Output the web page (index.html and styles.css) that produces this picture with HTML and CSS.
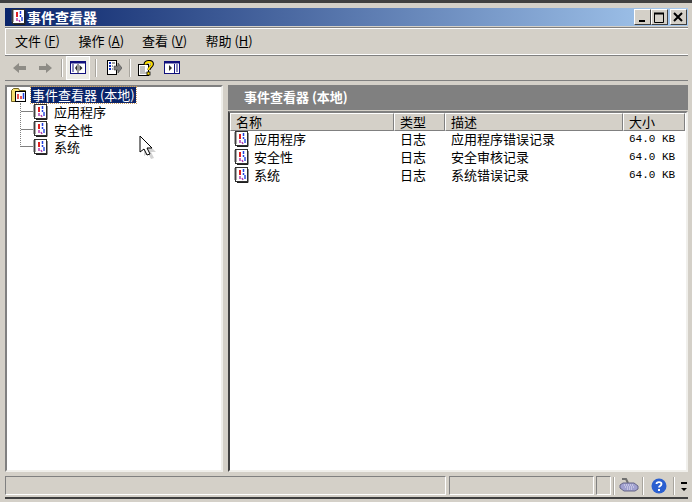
FILE: index.html
```html
<!DOCTYPE html>
<html lang="zh-CN">
<head>
    <meta charset="UTF-8">
    <title>事件查看器</title>
    <link rel="stylesheet" href="styles.css">
</head>
<body>
    <svg class="defs" width="0" height="0">
        <symbol id="log" viewBox="0 0 16 16">
            <rect x="2.500" y="0.500" width="12" height="14" fill="#fff" stroke="#303030"/>
            <path d="M15 2v13.500H4" fill="none" stroke="#202020"/>
            <path d="M1 2h3M1 4h3M1 6h3M1 8h3M1 10h3M1 12h3" stroke="#505050"/>
            <path d="M7 3v5" stroke="#e02020" stroke-width="2"/>
            <path d="M10.500 2v3M10.500 6v2" stroke="#2040e0" stroke-width="1.500"/>
            <path d="M12 8v4" stroke="#3050e0" stroke-width="1.500"/>
            <path d="M7 9v3M9 11l1 2" stroke="#b040b0" stroke-width="1.500"/>
        </symbol>
    </svg>

    <div class="window">
        <div class="title-bar">
            <svg class="title-icon" width="16" height="16"><use href="#log"/></svg>
            <span class="title-text">事件查看器</span>
            <div class="win-buttons">
                <button class="win-btn"><svg width="11" height="11"><path d="M2 8h6v2H2z"/></svg></button>
                <button class="win-btn"><svg width="11" height="11"><path d="M0.500 1.500h9v9h-9z" fill="none" stroke="#000"/><path d="M0 1.500h10" stroke="#000" stroke-width="2"/></svg></button>
                <button class="win-btn close"><svg width="11" height="11"><path d="M1 1l8 8M9 1L1 9" stroke="#000" stroke-width="2"/></svg></button>
            </div>
        </div>

        <div class="menu-bar">
            <span class="menu-item">文件 (<u>F</u>)</span>
            <span class="menu-item">操作 (<u>A</u>)</span>
            <span class="menu-item">查看 (<u>V</u>)</span>
            <span class="menu-item">帮助 (<u>H</u>)</span>
        </div>

        <div class="tool-bar">
            <svg class="tool back" width="16" height="16"><path d="M1 8l6-5v3h7v4H7v3z" fill="#8e8c86"/></svg>
            <svg class="tool forward" width="16" height="16"><path d="M15 8L9 3v3H2v4h7v3z" fill="#8e8c86"/></svg>
            <span class="sep"></span>
            <span class="tool-on">
                <svg width="16" height="16" viewBox="0 0 16 16">
                    <rect x="0.500" y="1.500" width="15" height="12" fill="#fff" stroke="#10107c"/>
                    <path d="M0 2.500h16" stroke="#10107c" stroke-width="2"/>
                    <path d="M2 5h2M2 7h2M2 9h2M2 11h2" stroke="#10107c"/>
                    <path d="M7 5l-2 3 2 3zM9.500 5v6l3-3z" fill="#303030"/>
                    <path d="M8 4v9" stroke="#303030"/>
                </svg>
            </span>
            <span class="sep"></span>
            <svg class="tool export" width="16" height="16" viewBox="0 0 16 16">
                <rect x="1.500" y="0.500" width="9" height="14" fill="#fff" stroke="#000"/>
                <path d="M3 3h2M3 6h2M3 9h2" stroke="#1030c0" stroke-width="2"/>
                <path d="M6 3h3M6 6h1M6 9h1" stroke="#404040"/>
                <path d="M8 6h4V3l4 5-4 5v-3H8z" fill="#808080" stroke="#303030" stroke-width="0.500"/>
            </svg>
            <span class="sep"></span>
            <svg class="tool help-tool" width="16" height="16" viewBox="0 0 16 16">
                <rect x="0.500" y="4.500" width="10" height="11" fill="#fff" stroke="#000"/>
                <path d="M2 7h5M2 9h5M2 11h5M2 13h7" stroke="#808080"/>
                <path d="M7 4.500C7 1 14.500 0 14.500 4c0 2.500-3.500 3-3.500 6" fill="none" stroke="#000" stroke-width="3"/>
                <path d="M7.500 4.500C7.500 1.500 14 1 14 4c0 2.500-3.500 3-3.500 6" fill="none" stroke="#ffe000" stroke-width="1.800"/>
                <rect x="9" y="12" width="3" height="3" fill="#ffe000" stroke="#000" stroke-width="0.800"/>
            </svg>
            <svg class="tool" width="16" height="16" viewBox="0 0 16 16">
                <rect x="0.500" y="1.500" width="15" height="12" fill="#fff" stroke="#10107c"/>
                <path d="M0 2.500h16" stroke="#10107c" stroke-width="2"/>
                <path d="M12 5h2M12 7h2M12 9h2M12 11h2" stroke="#10107c"/>
                <path d="M5 5v6l3-3z" fill="#303030"/>
                <path d="M10.500 4v9" stroke="#10107c"/>
            </svg>
        </div>

        <div class="panes">
            <div class="tree-pane">
                <div class="tree-root">
                    <svg width="16" height="16" viewBox="0 0 16 16">
                        <path d="M0.500 3.500l2-2h5l1 2h6v11h-14z" fill="#f4e070" stroke="#706020"/>
                        <rect x="4.500" y="4.500" width="10" height="10" fill="#fff" stroke="#000"/>
                        <path d="M7 7v5M10 9v3" stroke="#e02020" stroke-width="1.500"/>
                        <path d="M12.500 6v6" stroke="#2040e0" stroke-width="1.500"/>
                    </svg>
                    <span class="selected">事件查看器 (本地)</span>
                </div>
                <div class="tree-children">
                    <div class="tree-node"><svg width="16" height="16"><use href="#log"/></svg><span>应用程序</span></div>
                    <div class="tree-node"><svg width="16" height="16"><use href="#log"/></svg><span>安全性</span></div>
                    <div class="tree-node"><svg width="16" height="16"><use href="#log"/></svg><span>系统</span></div>
                </div>
                <svg class="cursor" width="18" height="24" viewBox="0 0 18 24">
                    <path d="M4 3v16l4-3 3 6 3-1-3-6h5z" fill="#a8a8a8" opacity="0.500" transform="translate(2 2)"/>
                    <path d="M2 1v16l4-3 3 6 3-1-3-6h5z" fill="#fff" stroke="#000"/>
                </svg>
            </div>

            <div class="list-pane">
                <div class="list-caption">事件查看器 (本地)</div>
                <div class="list-box">
                    <div class="list-head">
                        <span class="col-name">名称</span>
                        <span class="col-type">类型</span>
                        <span class="col-desc">描述</span>
                        <span class="col-size">大小</span>
                    </div>
                    <div class="list-row">
                        <span class="col-name"><svg width="16" height="16"><use href="#log"/></svg>应用程序</span>
                        <span class="col-type">日志</span>
                        <span class="col-desc">应用程序错误记录</span>
                        <span class="col-size">64.0 KB</span>
                    </div>
                    <div class="list-row">
                        <span class="col-name"><svg width="16" height="16"><use href="#log"/></svg>安全性</span>
                        <span class="col-type">日志</span>
                        <span class="col-desc">安全审核记录</span>
                        <span class="col-size">64.0 KB</span>
                    </div>
                    <div class="list-row">
                        <span class="col-name"><svg width="16" height="16"><use href="#log"/></svg>系统</span>
                        <span class="col-type">日志</span>
                        <span class="col-desc">系统错误记录</span>
                        <span class="col-size">64.0 KB</span>
                    </div>
                </div>
            </div>
        </div>

        <div class="status-bar">
            <span class="status-cell main"></span>
            <span class="status-cell mid"></span>
            <span class="status-cell small"></span>
            <span class="tray-sep"></span>
            <svg class="tray-icon keyboard" width="20" height="18" viewBox="0 0 20 18">
                <path d="M3 2h4l2 4" fill="none" stroke="#707070" stroke-width="2"/>
                <path d="M1 8l3-2h11l4 3v3l-3 2H5l-4-3z" fill="#a0a0d0" stroke="#666688"/>
                <path d="M5 8h9M6 10h9M8 12h5" stroke="#e8e8f4" stroke-dasharray="1 1"/>
            </svg>
            <span class="tray-sep"></span>
            <svg class="tray-icon help" width="16" height="16" viewBox="0 0 16 16">
                <circle cx="8" cy="8" r="7.500" fill="#2a5fd0"/>
                <path d="M5.500 6C5.500 3.500 10.500 3.500 10.500 6c0 2-2.500 2-2.500 3.500" fill="none" stroke="#fff" stroke-width="1.800"/>
                <rect x="7" y="11" width="2" height="2" fill="#fff"/>
            </svg>
            <span class="tray-sep"></span>
            <svg class="tray-arrows" width="8" height="16"><path d="M1 4h6v2H1zM1 10h6l-3 3z"/></svg>
        </div>
    </div>
</body>
</html>
```

FILE: styles.css
```css
html, body {
    margin: 0;
    height: 100%;
}
body {
    background: #d4d0c8;
    font-family: "Noto Sans CJK SC", "Liberation Sans", sans-serif;
    font-size: 13px;
    color: #000;
    overflow: hidden;
}
.defs {
    position: absolute;
}
.window {
    height: 502px;
    box-sizing: border-box;
    padding: 5px 4px 3px 5px;
    border-top: 3px solid #404040;
    display: flex;
    flex-direction: column;
}
.title-bar {
    height: 18px;
    flex: none;
    display: flex;
    align-items: center;
    padding: 0 1px 0 5px;
    background: linear-gradient(to right, #0a246a, #a6caf0);
    color: #fff;
}
.title-icon {
    margin-right: 1px;
}
.title-text {
    font-size: 14px;
    font-weight: bold;
    flex: 1;
    line-height: 18px;
}
.win-buttons {
    display: flex;
}
.win-btn {
    width: 17px;
    height: 16px;
    padding: 0;
    background: #d4d0c8;
    border: 1px solid;
    border-color: #fff #404040 #404040 #fff;
    display: flex;
    align-items: center;
    justify-content: center;
}
.win-btn.close {
    margin-left: 2px;
}
.menu-bar {
    height: 25px;
    flex: none;
    margin-top: 2px;
    display: flex;
    align-items: center;
    padding-left: 9px;
    border: solid #fff;
    border-width: 1px 0 1px 1px;
    box-shadow: 0 1px 0 #808080, 0 -1px 0 #808080;
}
.menu-item {
    width: 63.500px;
    flex: none;
    white-space: nowrap;
    line-height: 15px;
    padding-bottom: 2px;
}
.tool-bar {
    height: 25px;
    flex: none;
    margin-top: 1px;
    display: flex;
    align-items: center;
    padding-left: 7px;
    border-bottom: 1px solid #808080;
    box-sizing: border-box;
}
.tool {
    flex: none;
}
.back {
    margin-right: 9px;
}
.forward {
    margin-right: 8px;
}
.export {
    margin: 0 7px 0 9px;
}
.help-tool {
    margin: 0 10px 0 7px;
}
.sep {
    flex: none;
    width: 2px;
    height: 18px;
    background: #a8a59e;
    border-right: 1px solid #fff;
    box-sizing: border-box;
}
.tool-on {
    flex: none;
    display: flex;
    padding: 3px;
    margin: 0 5px 0 3px;
    background: #ecebe6;
    border: 1px solid #fff;
}
.panes {
    flex: 1;
    display: flex;
    gap: 5px;
    margin-top: 4px;
    min-height: 0;
}
.tree-pane {
    width: 218px;
    box-sizing: border-box;
    flex: none;
    background: #fff;
    border: 2px solid;
    border-color: #808080 #f0efeb #f0efeb #808080;
    padding: 0 0 0 4px;
    position: relative;
}
.tree-root {
    display: flex;
    align-items: center;
    height: 16px;
    gap: 4px;
}
.selected {
    background: #0a246a;
    color: #fff;
    outline: 1px dotted #d0a060;
    padding: 0 1px;
    line-height: 16px;
}
.tree-children {
    margin-left: 9px;
    border-left: 1px dotted #808080;
    height: 44px;
}
.tree-node {
    display: flex;
    align-items: center;
    height: 17.500px;
    gap: 6px;
    padding-left: 11px;
    background: linear-gradient(#808080, #808080) no-repeat 0 50% / 12px 1px;
    line-height: 17px;
}
.cursor {
    position: absolute;
    left: 131px;
    top: 48px;
}
.list-pane {
    flex: 1;
    display: flex;
    flex-direction: column;
    min-width: 0;
}
.list-caption {
    height: 25px;
    flex: none;
    background: #808080;
    color: #fff;
    font-weight: bold;
    line-height: 24px;
    padding-left: 16px;
}
.list-box {
    flex: 1;
    background: #fff;
    border: 2px solid;
    border-color: #808080 #f0efeb #f0efeb #404040;
    margin-top: 1px;
}
.list-head, .list-row {
    display: flex;
    white-space: nowrap;
}
.list-head span {
    height: 18px;
    box-sizing: border-box;
    background: #d4d0c8;
    border: 1px solid;
    border-color: #fff #808080 #808080 #fff;
    line-height: 16px;
    padding-left: 5px;
}
.col-name { width: 164px; }
.col-type { width: 51px; }
.col-desc { width: 178px; }
.col-size { width: 62px; }
.list-row {
    height: 18px;
    line-height: 16px;
}
.list-row span {
    display: flex;
    align-items: center;
    padding: 0 0 2px 6px;
    box-sizing: border-box;
}
.list-row .col-name {
    padding-left: 3px;
    gap: 5px;
}
.list-row .col-size {
    font-family: "Liberation Mono", monospace;
    font-size: 11px;
}
.status-bar {
    height: 23px;
    flex: none;
    margin-top: 2px;
    display: flex;
    align-items: center;
    border-bottom: 2px solid #404040;
}
.status-cell {
    flex: none;
    height: 19px;
    box-sizing: border-box;
    border: 1px solid;
    border-color: #808080 #fff #fff #808080;
    margin-right: 2px;
}
.status-cell.main { width: 441px; margin-right: 3px; }
.status-cell.mid { width: 145px; }
.status-cell.small { width: 15px; }
.tray-sep {
    flex: none;
    width: 2px;
    height: 18px;
    background: #a8a59e;
    border-right: 1px solid #fff;
    box-sizing: border-box;
}
.tray-icon {
    flex: none;
}
.tray-icon.keyboard {
    margin: 0 3px 0 4px;
}
.tray-icon.help {
    margin: 0 6px 0 7px;
}
.tray-arrows {
    flex: none;
    margin-left: 5px;
}
```
